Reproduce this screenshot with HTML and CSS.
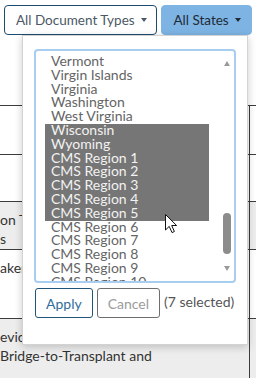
FILE: index.html
```html
<!DOCTYPE html>
<html lang="en">
  <head>
    <meta charset="UTF-8" />
    <meta name="viewport" content="width=device-width, initial-scale=1.0" />
    <title>Documents</title>
    <link rel="stylesheet" href="styles.css">
  </head>
  <body>
    <div class="toolbar">
      <button class="filter">All Document Types <span class="caret"></span></button>
      <button class="filter open">All States <span class="caret"></span></button>
      <button class="filter">All Years <span class="caret"></span></button>
    </div>

    <div class="results">
      <div class="head"></div>
      <div class="row row-a"><div class="cell"></div><div class="side"></div></div>
      <div class="row row-b"><div class="cell"></div><div class="side"></div></div>
      <div class="row row-c shaded"><div class="cell">on Therapy<br>s</div><div class="side"></div></div>
      <div class="row row-d"><div class="cell">aker</div><div class="side"></div></div>
      <div class="row row-e shaded"><div class="cell">evices, Ventricular Assist<br>Bridge-to-Transplant and</div><div class="side"></div></div>
    </div>

    <div class="dropdown">
      <div class="listbox">
        <ul class="options">
          <li class="option">Vermont</li>
          <li class="option">Virgin Islands</li>
          <li class="option">Virginia</li>
          <li class="option">Washington</li>
          <li class="option">West Virginia</li>
          <li class="option selected">Wisconsin</li>
          <li class="option selected">Wyoming</li>
          <li class="option selected">CMS Region 1</li>
          <li class="option selected">CMS Region 2</li>
          <li class="option selected">CMS Region 3</li>
          <li class="option selected">CMS Region 4</li>
          <li class="option selected">CMS Region 5</li>
          <li class="option">CMS Region 6</li>
          <li class="option">CMS Region 7</li>
          <li class="option">CMS Region 8</li>
          <li class="option">CMS Region 9</li>
          <li class="option">CMS Region 10</li>
        </ul>
        <div class="scrollbar">
          <span class="arrow-up"></span>
          <span class="thumb"></span>
          <span class="arrow-down"></span>
        </div>
      </div>
      <div class="actions">
        <button class="btn btn-apply">Apply</button>
        <button class="btn btn-cancel">Cancel</button>
        <span class="count">(7 selected)</span>
      </div>
    </div>

    <svg class="cursor" width="14" height="21" viewBox="0 0 14 21">
      <path d="M1.5 1.5 L1.5 17 L5.2 13.4 L8 19.6 L10.4 18.5 L7.7 12.5 L12.6 12.5 Z" fill="#fff" stroke="#111" stroke-width="1" stroke-linejoin="round" />
    </svg>
  </body>
</html>
```

FILE: styles.css
```css
* {
  margin: 0;
  padding: 0;
  box-sizing: border-box;
}

body {
  position: relative;
  width: 256px;
  height: 378px;
  overflow: hidden;
  font-family: Lato, "Liberation Sans", sans-serif;
  color: #333;
  background: #fff;
}

.toolbar {
  display: flex;
  gap: 4px;
  height: 40px;
  padding: 5px 0 5px 4px;
  white-space: nowrap;
}

.filter {
  display: flex;
  flex-shrink: 0;
  align-items: center;
  justify-content: center;
  gap: 6px;
  min-width: 91px;
  height: 30px;
  padding: 0 9px 0 11px;
  font-family: inherit;
  font-size: 13.5px;
  color: #4b5866;
  background: #fff;
  border: 1px solid #1f4b6e;
  border-radius: 4px;
}
.filter.open {
  color: #1f2a35;
  background: #7db4e3;
  border-color: #7db4e3;
}
.caret {
  border-top: 4px solid currentColor;
  border-left: 3.5px solid transparent;
  border-right: 3.5px solid transparent;
}

.head {
  height: 66px;
  border-bottom: 1px solid #3c3c3c;
}
.row {
  display: grid;
  grid-template-columns: 249px 1fr;
  border-bottom: 1px solid #3c3c3c;
}
.row-a { height: 49px; }
.row-b { height: 47px; }
.row-c { height: 48px; }
.row-d { height: 69px; }
.row-e { height: 59px; border-bottom: none; }
.shaded {
  background: #ededed;
}
.cell {
  padding-top: 8px;
  font-size: 14px;
  line-height: 19px;
  white-space: nowrap;
  overflow: hidden;
}
.side {
  border-left: 1px solid #3c3c3c;
}

.dropdown {
  position: absolute;
  left: 22px;
  top: 35px;
  width: 226px;
  height: 310px;
  padding: 13px 11px 0;
  background: #fff;
  border: 1px solid #d3d3d3;
  box-shadow: 0 2px 8px rgba(0, 0, 0, 0.2);
}

.listbox {
  display: flex;
  height: 234px;
  border: 2px solid #a8cdf1;
  border-radius: 4px;
  overflow: hidden;
}
.options {
  width: 164px;
  margin-left: 9px;
  padding-top: 4px;
  list-style: none;
  overflow: hidden;
}
.option {
  height: 13.8px;
  padding-left: 6px;
  font-size: 14px;
  line-height: 12px;
  color: #656565;
  white-space: nowrap;
}
.option.selected {
  color: #f2f2f2;
  background: #767676;
}

.scrollbar {
  display: flex;
  flex-direction: column;
  align-items: center;
  width: 14px;
  margin-left: auto;
  padding: 10px 0;
}
.arrow-up {
  border-bottom: 5px solid #9a9a9a;
  border-left: 3.5px solid transparent;
  border-right: 3.5px solid transparent;
}
.arrow-down {
  border-top: 5px solid #9a9a9a;
  border-left: 3.5px solid transparent;
  border-right: 3.5px solid transparent;
}
.thumb {
  width: 8px;
  height: 41px;
  margin: 147px 0 12px;
  background: #8c8c8c;
  border-radius: 4px;
}

.actions {
  display: flex;
  align-items: center;
  gap: 4px;
  margin-top: 5px;
  padding-left: 1px;
}
.btn {
  height: 30px;
  padding: 0 10px;
  font-family: inherit;
  font-size: 14px;
  background: #fff;
  border: 1px solid;
  border-radius: 3px;
}
.btn-apply {
  color: #2f6e9c;
  border-color: #1e5578;
}
.btn-cancel {
  color: #9b9b9b;
  border-color: #6e6e6e;
}
.count {
  margin-bottom: 3px;
  font-size: 14px;
  color: #555;
}

.cursor {
  position: absolute;
  left: 164px;
  top: 213px;
}
```
